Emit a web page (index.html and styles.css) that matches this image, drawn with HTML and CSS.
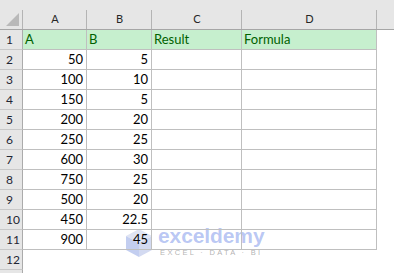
FILE: index.html
```html
<!DOCTYPE html>
<html>
<head>
<meta charset="utf-8">
<link rel="stylesheet" href="styles.css">
</head>
<body>
<div class="sheet">
  <div class="ch corner"><svg width="22" height="29" viewBox="0 0 22 29"><polygon points="19,13 19,26 6,26" fill="#b9b9b9"/></svg></div>
  <div class="ch">A</div><div class="ch">B</div><div class="ch">C</div><div class="ch">D</div><div class="ch fill"></div>

  <div class="rh">1</div><div class="c g">A</div><div class="c g">B</div><div class="c g">Result</div><div class="c g">Formula</div><div class="e"></div>
  <div class="rh">2</div><div class="c n">50</div><div class="c n">5</div><div class="c"></div><div class="c"></div><div class="e"></div>
  <div class="rh">3</div><div class="c n">100</div><div class="c n">10</div><div class="c"></div><div class="c"></div><div class="e"></div>
  <div class="rh">4</div><div class="c n">150</div><div class="c n">5</div><div class="c"></div><div class="c"></div><div class="e"></div>
  <div class="rh">5</div><div class="c n">200</div><div class="c n">20</div><div class="c"></div><div class="c"></div><div class="e"></div>
  <div class="rh">6</div><div class="c n">250</div><div class="c n">25</div><div class="c"></div><div class="c"></div><div class="e"></div>
  <div class="rh">7</div><div class="c n">600</div><div class="c n">30</div><div class="c"></div><div class="c"></div><div class="e"></div>
  <div class="rh">8</div><div class="c n">750</div><div class="c n">25</div><div class="c"></div><div class="c"></div><div class="e"></div>
  <div class="rh">9</div><div class="c n">500</div><div class="c n">20</div><div class="c"></div><div class="c"></div><div class="e"></div>
  <div class="rh">10</div><div class="c n">450</div><div class="c n">22.5</div><div class="c"></div><div class="c"></div><div class="e"></div>
  <div class="rh">11</div><div class="c n">900</div><div class="c n">45</div><div class="c"></div><div class="c"></div><div class="e"></div>
  <div class="rh">12</div><div class="e wide"></div>
  <div class="rh last"></div><div class="e wide"></div>
</div>

<div class="watermark">
  <svg class="hex" width="28" height="28" viewBox="0 0 28 28">
    <polygon points="14,0 27,7 14,14 1,7" fill="#dfe4f3"/>
    <polygon points="1,7 14,14 14,28 1,21" fill="#c3cef0"/>
    <polygon points="27,7 27,21 14,28 14,14" fill="#d3daf1"/>
  </svg>
  <div class="brand">
    <div class="name">exceldemy</div>
    <div class="tag">EXCEL · DATA · BI</div>
  </div>
</div>
</body>
</html>
```

FILE: styles.css
```css
html {
  background: #ffffff;
}

html, body {
  margin: 0;
  padding: 0;
}

body {
  width: 394px;
  height: 273px;
  overflow: hidden;
  position: relative;
  font-family: Lato, "Open Sans", sans-serif;
}

.sheet {
  display: grid;
  grid-template-columns: 23px 64px 65px 90px 135px 1fr;
  grid-template-rows: 30px repeat(12, 20px) 1fr;
  height: 273px;
}

.sheet > div {
  box-sizing: border-box;
  overflow: hidden;
  white-space: nowrap;
}

.ch {
  background: #e6e6e6 linear-gradient(#b4b4b4, #b4b4b4) no-repeat right bottom / 1px 19px;
  border-bottom: 1px solid #a6a6a6;
  color: #262626;
  font-size: 11px;
  line-height: 11px;
  padding-top: 13px;
  text-align: center;
}

.corner {
  padding: 0;
}

.corner svg {
  display: block;
}

.ch.fill {
  background: #e6e6e6;
}

.rh {
  background: #e6e6e6;
  border-right: 1px solid #ababab;
  border-bottom: 1px solid #c8c8c8;
  color: #1f2533;
  font-size: 12px;
  line-height: 19px;
  padding-left: 6px;
}

.rh.last {
  border-bottom: none;
}

.c {
  border-right: 1px solid #bfbfbf;
  border-bottom: 1px solid #bfbfbf;
  font-size: 13px;
  line-height: 19px;
  color: #000000;
  padding: 0 2px;
}

.c.n {
  text-align: right;
  padding-right: 3px;
}

.c.g {
  background: #c6efce;
  color: #006100;
}

.e.wide {
  grid-column: 2 / -1;
}

.watermark {
  position: absolute;
  z-index: -1;
  left: 125px;
  top: 229px;
  display: flex;
  align-items: flex-start;
  gap: 5px;
}

.hex {
  display: block;
}

.brand {
  display: flex;
  flex-direction: column;
  align-items: center;
  margin-top: -1px;
}

.name {
  font-family: "Liberation Sans", Arial, sans-serif;
  font-weight: bold;
  font-size: 21px;
  line-height: 16px;
  color: rgba(100, 130, 230, 0.45);
  letter-spacing: -0.1px;
}

.tag {
  font-family: "Liberation Sans", Arial, sans-serif;
  font-size: 7.5px;
  line-height: 8px;
  letter-spacing: 2.3px;
  color: rgba(100, 100, 100, 0.5);
  margin-top: 5px;
}
```
